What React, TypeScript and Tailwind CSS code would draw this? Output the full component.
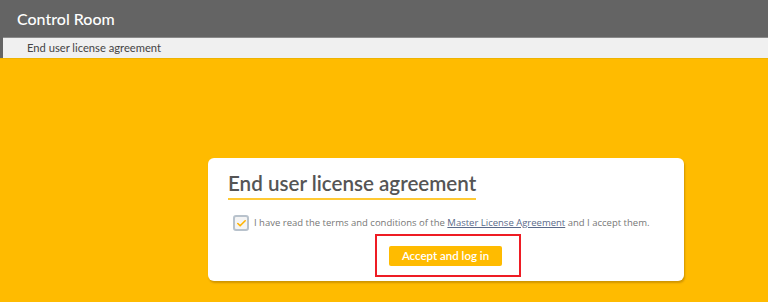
import { Check } from "lucide-react";

const App = () => {
  return (
    <div className="flex h-[302px] w-[768px] flex-col overflow-hidden bg-[#ffbb00] font-['Lato',sans-serif]">
      {/* Header */}
      <header className="flex h-[37px] shrink-0 items-center bg-[#646464] px-[17px]">
        <span className="text-[16px] font-medium text-white">Control Room</span>
      </header>

      {/* Breadcrumb */}
      <div className="flex h-[21px] shrink-0 bg-[#646464] pl-[3px]">
        <div className="flex flex-1 items-center border-t border-[#8a8a8a] bg-[#f0f0f0] pl-[24px] text-[11.2px] text-[#444]">
          End user license agreement
        </div>
      </div>
      <div className="h-[1px] shrink-0 bg-[#eeb300]" />

      {/* Content */}
      <main className="flex flex-1 pl-[208px] pt-[99px]">
        <div className="flex h-[123px] w-[476px] flex-col rounded-[6px] bg-white pl-[20px] pt-[12px] shadow-[1px_2px_2px_rgba(120,80,0,0.35)]">
          <h1 className="w-fit border-b-2 border-[#ffc933] pb-[2px] text-[20.6px] font-semibold leading-[26px] text-[#555]">
            End user license agreement
          </h1>

          <div className="mt-[15px] flex items-center pl-[5px]">
            <span className="flex h-[16px] w-[16px] items-center justify-center rounded-[3px] border-2 border-[#b8c2cc] bg-[#f4f4f4]">
              <Check className="h-[11px] w-[11px] text-[#ffb300]" strokeWidth={3.5} />
            </span>
            <span className="ml-[5px] font-['Open_Sans',sans-serif] text-[9.5px] text-[#777]">
              I have read the terms and conditions of the{" "}
              <a className="text-[#5a6a8a] underline">Master License Agreement</a> and I accept them.
            </span>
          </div>

          <div className="mt-[3px] ml-[147px] flex h-[43px] w-[146px] items-center border-2 border-[#ee1c24] pl-[12px]">
            <button className="h-[20px] w-[113px] rounded-[2px] bg-[#ffbb00] text-[11.5px] font-semibold text-white">
              Accept and log in
            </button>
          </div>
        </div>
      </main>
    </div>
  );
};

export default App;
